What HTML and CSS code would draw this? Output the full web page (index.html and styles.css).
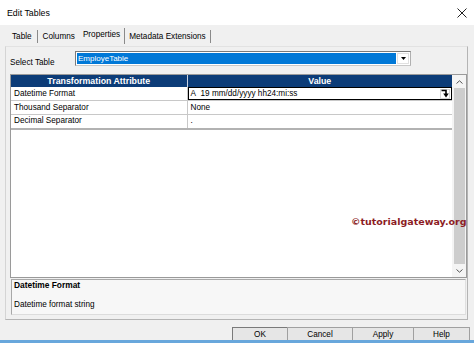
FILE: index.html
```html
<!DOCTYPE html>
<html lang="en">
  <head>
    <meta charset="UTF-8" />
    <meta name="viewport" content="width=device-width, initial-scale=1.0" />
    <title>Edit Tables</title>
    <link rel="stylesheet" href="styles.css">
  </head>
  <body>
    <div class="titlebar">
      <span class="title">Edit Tables</span>
      <svg class="close" width="10" height="10" viewBox="0 0 10 10">
        <path d="M0.5 0.5 L9.5 9.5 M9.5 0.5 L0.5 9.5" stroke="#222" stroke-width="1" fill="none" />
      </svg>
    </div>

    <div class="tabs">
      <div class="tab">Table</div>
      <div class="tab no-sep">Columns</div>
      <div class="tab active">Properties</div>
      <div class="tab">Metadata Extensions</div>
    </div>

    <div class="panel">
      <div class="select-row">
        <span class="label">Select Table</span>
        <div class="combo">
          <span class="combo-value">EmployeTable</span>
          <span class="combo-btn">
            <svg width="5" height="3" viewBox="0 0 5 3"><path d="M0 0 H5 L2.5 3 Z" fill="#000" /></svg>
          </span>
        </div>
      </div>

      <div class="grid">
        <div class="grid-main">
          <table>
            <thead>
              <tr>
                <th class="col-attr">Transformation Attribute</th>
                <th>Value</th>
              </tr>
            </thead>
            <tbody>
              <tr>
                <td class="attr">Datetime Format</td>
                <td class="edit">
                  <div class="edit-box">
                    <span class="edit-text">A&nbsp;&nbsp;19 mm/dd/yyyy hh24:mi:ss</span>
                    <span class="edit-btn">
                      <svg width="8" height="9" viewBox="0 0 8 9">
                        <path d="M0.5 1.5 H5 V5" stroke="#000" stroke-width="1.6" fill="none" />
                        <path d="M2.2 4.5 H7.8 L5 8.5 Z" fill="#000" />
                      </svg>
                    </span>
                  </div>
                </td>
              </tr>
              <tr class="tall">
                <td class="attr">Thousand Separator</td>
                <td>None</td>
              </tr>
              <tr class="tall last">
                <td class="attr">Decimal Separator</td>
                <td>.</td>
              </tr>
            </tbody>
          </table>
          <div class="watermark">©tutorialgateway.org</div>
        </div>
        <div class="scrollbar">
          <div class="sb-arrow">
            <svg width="7" height="4" viewBox="0 0 7 4"><path d="M0.5 3.5 L3.5 0.8 L6.5 3.5" stroke="#555" stroke-width="1" fill="none" /></svg>
          </div>
          <div class="thumb"></div>
          <div class="sb-arrow">
            <svg width="7" height="4" viewBox="0 0 7 4"><path d="M0.5 0.5 L3.5 3.2 L6.5 0.5" stroke="#555" stroke-width="1" fill="none" /></svg>
          </div>
        </div>
      </div>

      <div class="desc">
        <div class="desc-title">Datetime Format</div>
        <div class="desc-text">Datetime format string</div>
      </div>
    </div>

    <div class="footer">
      <button class="btn btn-ok">OK</button>
      <button class="btn btn-cancel">Cancel</button>
      <button class="btn btn-apply">Apply</button>
      <button class="btn btn-help">Help</button>
    </div>
    <div class="strip"></div>
  </body>
</html>
```

FILE: styles.css
```css
* {
  box-sizing: border-box;
}
body {
  margin: 0;
  width: 474px;
  height: 343px;
  overflow: hidden;
  background: #f0f0f0;
  font-family: "Liberation Sans", Arial, sans-serif;
  font-size: 8px;
  color: #000;
  display: flex;
  flex-direction: column;
}
.titlebar {
  flex: none;
  height: 25px;
  background: #fff;
  display: flex;
  align-items: center;
  justify-content: space-between;
  padding: 0 7px;
}
.title {
  font-size: 8.8px;
}
.tabs {
  flex: none;
  height: 21px;
  display: flex;
  align-items: flex-start;
  padding: 5px 0 0 7px;
}
.tab {
  height: 13px;
  line-height: 14px;
  padding: 0 5px;
  font-size: 8.2px;
  border-right: 1px solid #8a8a8a;
}
.tab.no-sep {
  border-right: none;
  padding-right: 4px;
}
.tab.active {
  margin-top: -2px;
  height: 16px;
  line-height: 13px;
  padding: 0 4px;
}
.tab:last-child {
  padding: 0 4px;
}
.panel {
  flex: none;
  height: 274px;
  margin: 0 6px 0 5px;
  border: 1px solid #b4b4b4;
  border-top-color: #e2e2e2;
  border-left-color: #d4d4d4;
  display: flex;
  flex-direction: column;
}
.select-row {
  display: flex;
  margin: 4px 0 0 4px;
  height: 15px;
}
.label {
  width: 65px;
  padding-top: 6px;
  line-height: 12px;
  font-size: 8.2px;
}
.combo {
  width: 336px;
  height: 15px;
  border: 1px solid #7a7a7a;
  border-right-color: #b0b0b0;
  border-bottom-color: #c8c8c8;
  background: #fff;
  padding: 1px;
  display: flex;
}
.combo-value {
  flex: 1;
  background: #0078d7;
  color: #fff;
  line-height: 11px;
  padding-left: 1px;
}
.combo-btn {
  width: 12px;
  margin-left: 1px;
  border: 1px solid #e0e0e0;
  display: flex;
  align-items: center;
  justify-content: center;
}
.grid {
  margin: 8px 0 0 4px;
  height: 204px;
  border: 1px solid #9a9a9a;
  background: #fff;
  display: flex;
}
.grid-main {
  flex: 1;
  position: relative;
}
table {
  width: 100%;
  border-collapse: collapse;
  table-layout: fixed;
}
th {
  height: 12px;
  line-height: 12px;
  padding: 0;
  background: #0c3c78;
  color: #fff;
  font-weight: bold;
  font-size: 8.8px;
}
th.col-attr {
  width: 176px;
  border-right: 1px solid #c9d2e0;
}
td {
  height: 13px;
  line-height: 12px;
  padding: 0 3px;
  font-size: 8.2px;
  border-bottom: 1px solid #c8c8c8;
  white-space: nowrap;
}
tr.tall td {
  height: 14px;
}
td.attr {
  border-right: 1px solid #c8c8c8;
}
td.edit {
  padding: 0;
}
.edit-box {
  height: 13px;
  border: 1px solid #000;
  display: flex;
  align-items: center;
  padding-left: 2px;
}
.edit-text {
  flex: 1;
}
.edit-btn {
  width: 10px;
  height: 10px;
  margin-right: 1px;
  border: 1px solid #d6d6d6;
  background: #fff;
  display: flex;
  align-items: center;
  justify-content: center;
}
tr.last td {
  border-bottom: 2px solid #b2b2b2;
}
.watermark {
  position: absolute;
  left: 340px;
  top: 141px;
  font-family: "DejaVu Sans", sans-serif;
  font-weight: bold;
  font-size: 9.5px;
  line-height: 12px;
  color: #8c1c24;
}
.scrollbar {
  width: 14px;
  background: #f4f4f4;
  display: flex;
  flex-direction: column;
}
.sb-arrow {
  height: 13px;
  display: flex;
  align-items: center;
  justify-content: center;
}
.thumb {
  flex: 1;
  margin: 0 1px 0 2px;
  background: #cdcdcd;
}
.desc {
  margin: 1px 1px 0 5px;
  height: 36px;
  background: #f7f7f7;
  border: 1px solid #a8a8a8;
  border-right-color: #e0e0e0;
  border-bottom-color: #dcdcdc;
  padding: 0 2px;
}
.desc-title {
  font-weight: bold;
  font-size: 8.4px;
  line-height: 11px;
}
.desc-text {
  margin-top: 8px;
  font-size: 8.2px;
  line-height: 12px;
}
.footer {
  flex: none;
  height: 20px;
  overflow: hidden;
  display: flex;
  justify-content: flex-end;
  align-items: flex-start;
  padding: 7px 4px 0 0;
}
.btn {
  height: 20px;
  padding: 0;
  margin: 0;
  background: #e6e6e6;
  border: 1px solid #a0a0a0;
  border-right: none;
  border-radius: 0;
  font-family: "Liberation Sans", Arial, sans-serif;
  font-size: 8.2px;
  line-height: 14px;
  color: #000;
  display: flex;
  justify-content: center;
  align-items: flex-start;
}
.btn-ok {
  width: 55px;
  border-color: #7a7a7a;
}
.btn-cancel {
  width: 65px;
}
.btn-apply {
  width: 61px;
}
.btn-help {
  width: 57px;
  border-right: 1px solid #a0a0a0;
}
.strip {
  flex: none;
  height: 3px;
  background: #68a7dc;
}
```
